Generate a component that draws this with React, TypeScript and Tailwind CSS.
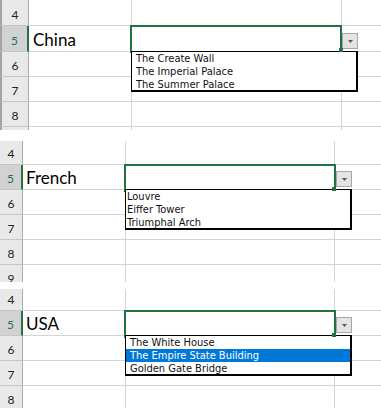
type Row = { n: string; h: string; sel?: boolean };

type Sheet = {
  label: string;
  items: string[];
  hi?: number;
  box: string; // section height
  head: string; // row header width
  colA: string;
  colB: string;
  edge?: boolean;
  labelPad: string;
  rows: Row[];
  green: string;
  handle: string;
  button: string;
  list: string;
  itemPad: string;
};

const sheets: Sheet[] = [
  {
    label: "China",
    items: ["The Create Wall", "The Imperial Palace", "The Summer Palace"],
    box: "h-[130px]",
    head: "w-[29px]",
    colA: "w-[103px]",
    colB: "w-[210px]",
    edge: true,
    labelPad: "pl-[4px]",
    rows: [
      { n: "4", h: "h-[26px]" },
      { n: "5", h: "h-[26px]", sel: true },
      { n: "6", h: "h-[25px]" },
      { n: "7", h: "h-[25px]" },
      { n: "8", h: "h-[25px]" },
      { n: "", h: "h-[25px]" },
    ],
    green: "left-[130px] top-[25px]",
    handle: "left-[339px] top-[48px]",
    button: "left-[342px] top-[33px]",
    list: "left-[131px] top-[51px]",
    itemPad: "pl-[4px]",
  },
  {
    label: "French",
    items: ["Louvre", "Eiffer Tower", "Triumphal Arch"],
    box: "h-[141px]",
    head: "w-[23px]",
    colA: "w-[103px]",
    colB: "w-[209px]",
    labelPad: "pl-[3px]",
    rows: [
      { n: "4", h: "h-[24px]" },
      { n: "5", h: "h-[25px]", sel: true },
      { n: "6", h: "h-[25px]" },
      { n: "7", h: "h-[25px]" },
      { n: "8", h: "h-[25px]" },
      { n: "9", h: "h-[25px]" },
    ],
    green: "left-[124px] top-[23px]",
    handle: "left-[332px] top-[46px]",
    button: "left-[336px] top-[30px]",
    list: "left-[125px] top-[48px]",
    itemPad: "pl-[1px]",
  },
  {
    label: "USA",
    items: ["The White House", "The Empire State Building", "Golden Gate Bridge"],
    hi: 1,
    box: "h-[119px]",
    head: "w-[23px]",
    colA: "w-[103px]",
    colB: "w-[209px]",
    labelPad: "pl-[3px]",
    rows: [
      { n: "4", h: "h-[22px]" },
      { n: "5", h: "h-[25px]", sel: true },
      { n: "6", h: "h-[25px]" },
      { n: "7", h: "h-[25px]" },
      { n: "8", h: "h-[25px]" },
    ],
    green: "left-[124px] top-[21px]",
    handle: "left-[332px] top-[44px]",
    button: "left-[336px] top-[28px]",
    list: "left-[125px] top-[46px]",
    itemPad: "pl-[4px]",
  },
];

function SheetBlock({ s }: { s: Sheet }) {
  return (
    <div className={`relative overflow-hidden ${s.box}`}>
      {s.rows.map((r, i) => (
        <div key={i} className={`flex ${r.h}`}>
          <div
            className={`${s.head} shrink-0 flex items-end justify-center pb-[4px] border-b border-[#c6c6c6] font-['Lato',sans-serif] text-[12px] leading-none ${
              r.sel
                ? "bg-[#d2d2d2] border-r-2 border-r-[#217346] text-[#2b6f4f]"
                : "bg-[#e9e9e9] border-r border-r-[#adadad] text-[#222222]"
            } ${s.edge ? "border-l-2 border-l-[#a4a4a4]" : ""}`}
          >
            {r.n}
          </div>
          <div
            className={`${s.colA} shrink-0 flex items-end ${s.labelPad} pb-[3px] border-r border-b border-[#d4d4d4] font-['Lato',sans-serif] text-[17px] leading-none text-black`}
          >
            {r.sel ? s.label : ""}
          </div>
          <div className={`${s.colB} shrink-0 border-r border-b border-[#d4d4d4]`} />
          <div className="flex-1 border-b border-[#d4d4d4]" />
        </div>
      ))}

      {/* selected cell */}
      <div className={`absolute ${s.green} w-[212px] h-[28px] border-2 border-[#217346]`} />

      {/* dropdown button */}
      <div
        className={`absolute ${s.button} w-[16px] h-[16px] bg-[#e4e4e4] border border-[#a6a6a6] flex items-center justify-center`}
      >
        <svg width="5" height="3" viewBox="0 0 5 3">
          <polygon points="0,0 5,0 2.5,3" fill="#5a5a5a" />
        </svg>
      </div>

      {/* list */}
      <div
        className={`absolute ${s.list} w-[227px] bg-white border-t border-l border-r-2 border-b-2 border-black font-['DejaVu_Sans_Condensed','DejaVu_Sans',sans-serif] text-[11px] leading-[13px] text-[#111111]`}
      >
        {s.items.map((it, i) => (
          <div
            key={it}
            className={`h-[13px] last:h-[12px] ${s.itemPad} whitespace-nowrap ${
              s.hi === i ? "bg-[#0078d7] text-white" : ""
            }`}
          >
            {it}
          </div>
        ))}
      </div>

      <div className={`absolute ${s.handle} w-[4px] h-[4px] bg-[#217346]`} />
    </div>
  );
}

export default function App() {
  return (
    <div className="w-[381px] h-[408px] overflow-hidden bg-white">
      <SheetBlock s={sheets[0]} />
      <div className="h-[11px]" />
      <SheetBlock s={sheets[1]} />
      <div className="h-[7px]" />
      <SheetBlock s={sheets[2]} />
    </div>
  );
}
